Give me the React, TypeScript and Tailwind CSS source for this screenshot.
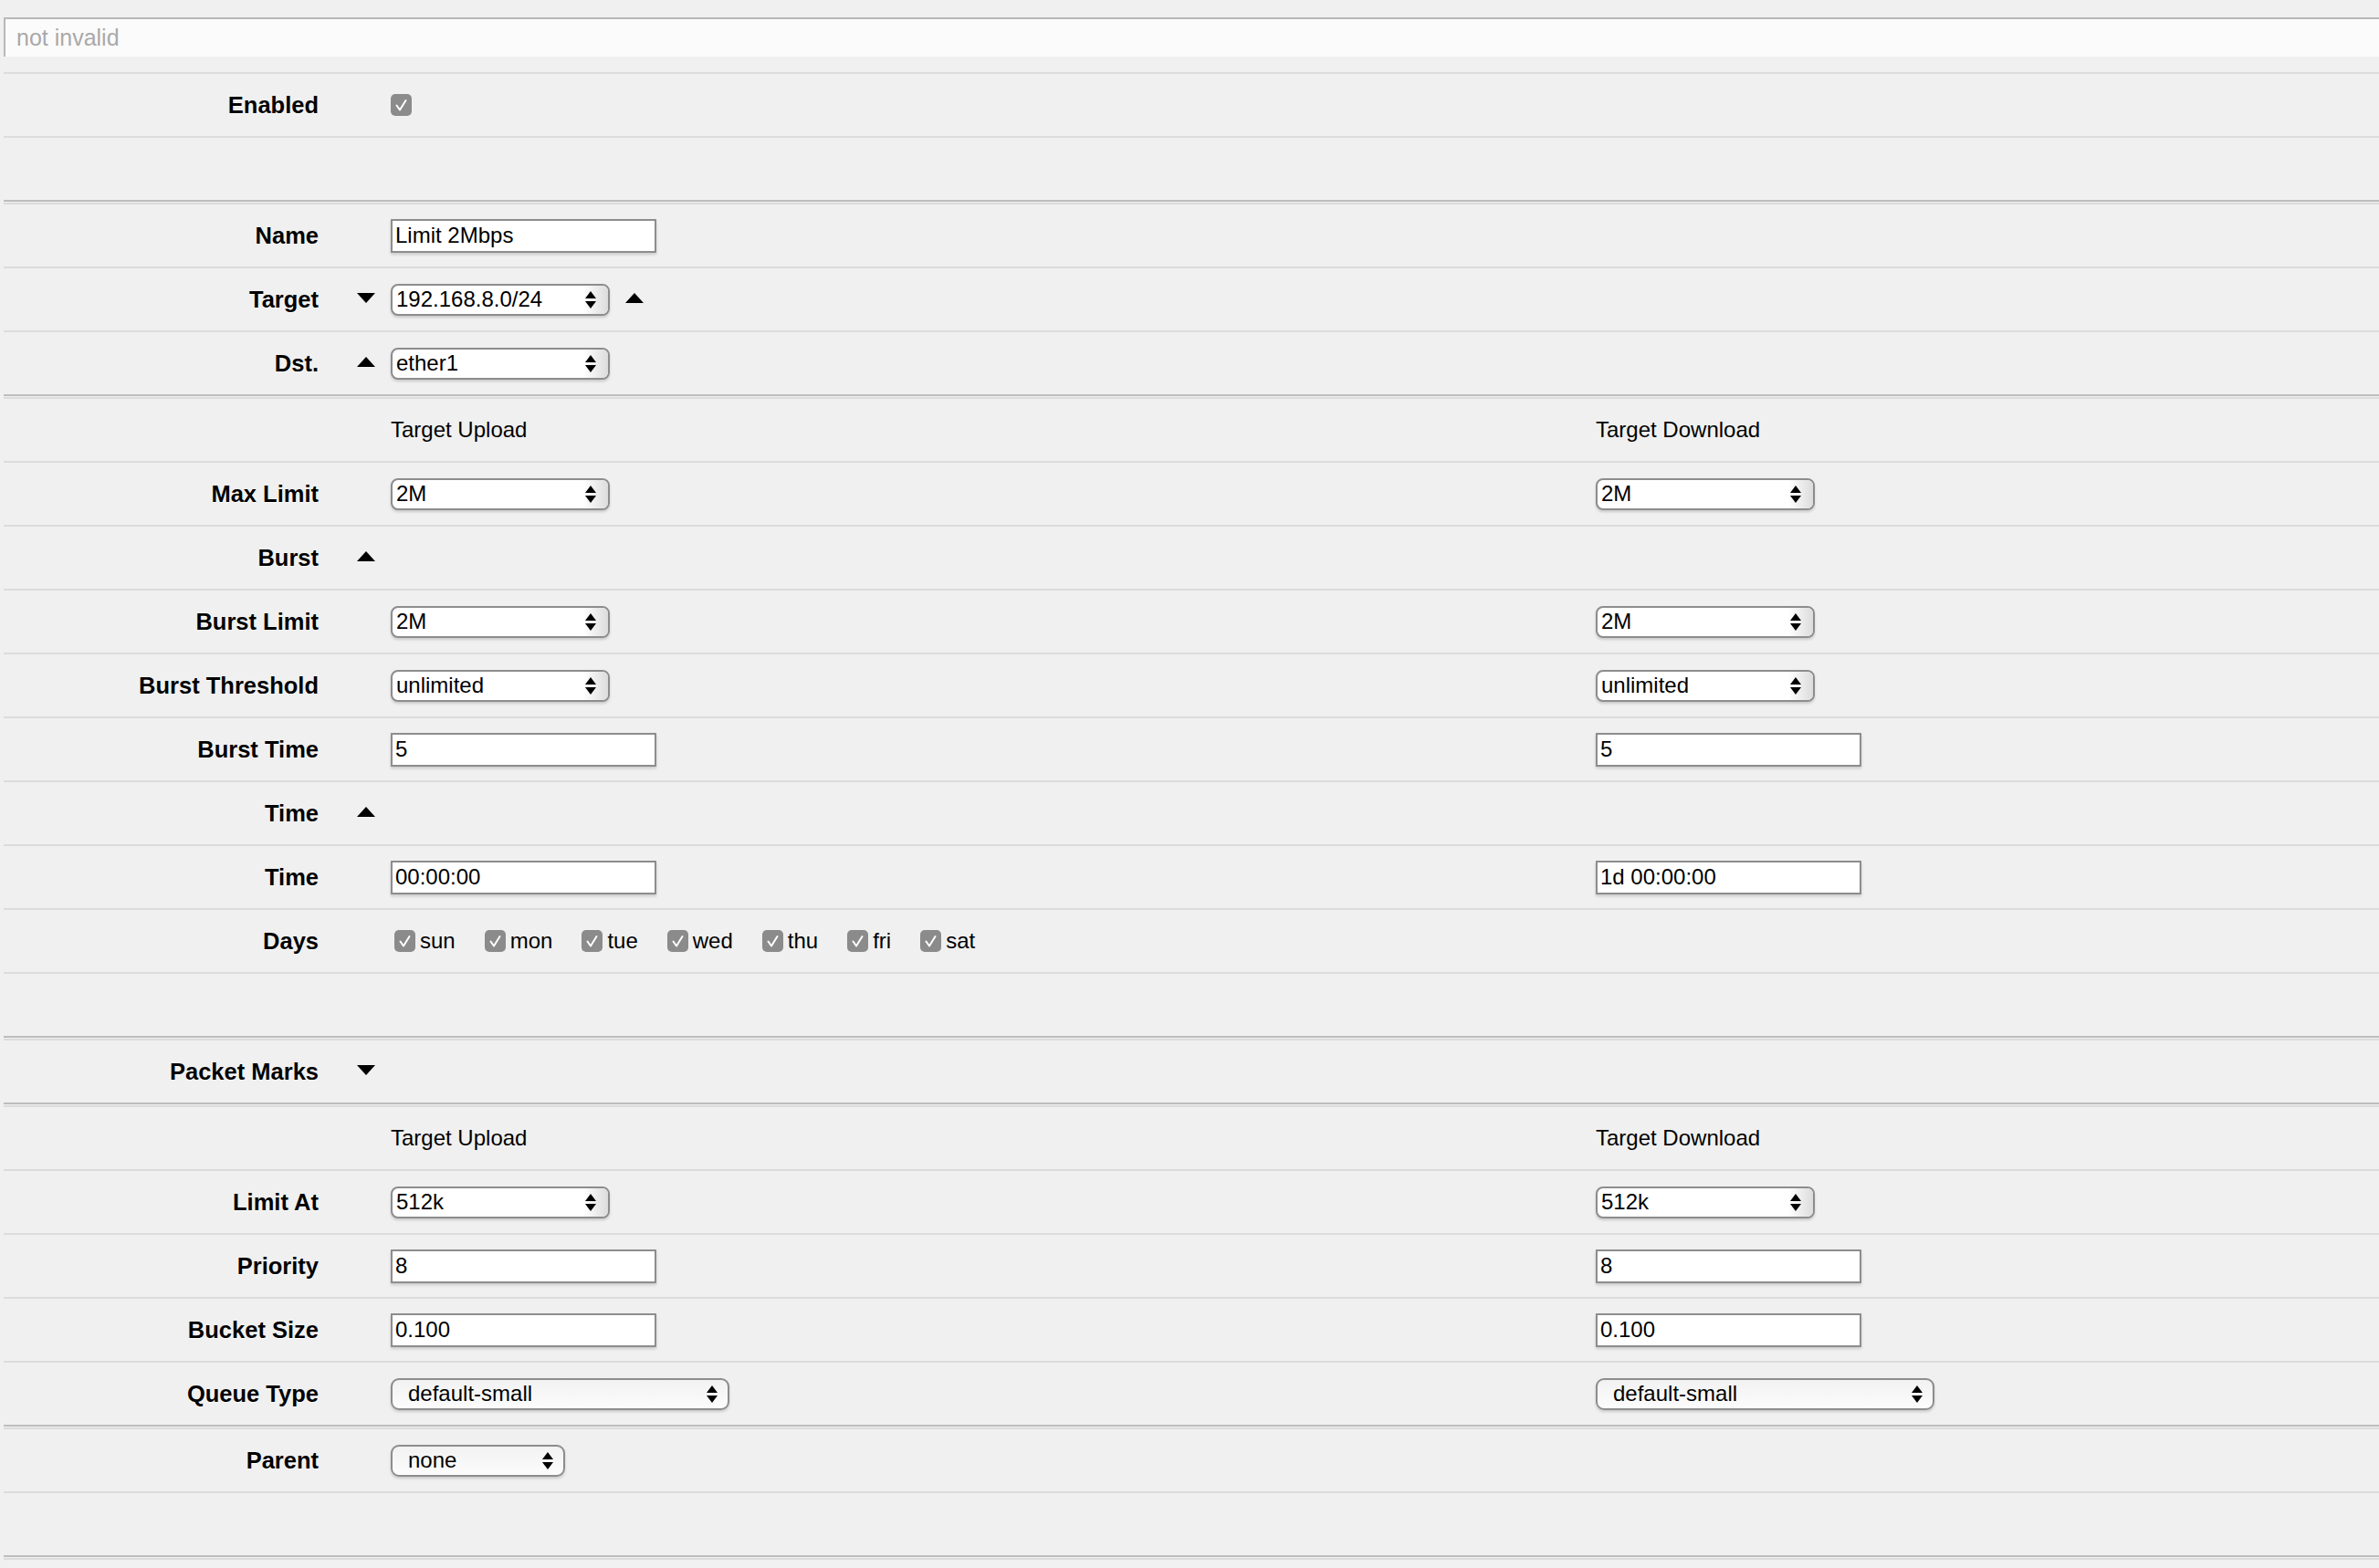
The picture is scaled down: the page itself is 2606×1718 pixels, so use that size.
import React from "react";

function Tri({ dir }: { dir: "up" | "down" }) {
  return (
    <svg width="20" height="11" viewBox="0 0 20 11" className="block">
      <polygon points={dir === "up" ? "10,0 20,11 0,11" : "0,0 20,0 10,11"} fill="#000" />
    </svg>
  );
}

function Arrows() {
  return (
    <svg width="12" height="19" viewBox="0 0 12 19" className="block">
      <polygon points="6,0 12,8 0,8" fill="#000" />
      <polygon points="0,11 12,11 6,19" fill="#000" />
    </svg>
  );
}

function Check() {
  return (
    <div className="w-[23px] h-[24px] rounded-[5px] bg-[#8b8b8b] flex items-center justify-center shrink-0">
      <svg width="15" height="15" viewBox="0 0 15 15" className="block">
        <polyline points="2.5,7.5 6,12.5 12.5,2" fill="none" stroke="#fff" strokeWidth="2" strokeLinecap="round" strokeLinejoin="round" />
      </svg>
    </div>
  );
}

function Select({ value }: { value: string }) {
  return (
    <div className="w-[240px] h-[35px] rounded-[8px] border-2 border-[#8d8d8d] bg-white flex items-center overflow-hidden shadow-[0_2px_3px_rgba(0,0,0,0.16)]">
      <span className="flex-1 pl-[4px] text-[24px] leading-none text-black whitespace-nowrap">{value}</span>
      <div className="h-full w-[27px] flex items-center justify-start pl-[2px] bg-gradient-to-r from-white to-[#dcdcdc]">
        <Arrows />
      </div>
    </div>
  );
}

function Popup({ value, wide }: { value: string; wide?: boolean }) {
  return (
    <div
      className={
        (wide ? "w-[371px]" : "w-[191px]") +
        " h-[35px] rounded-[9px] border-2 border-[#8d8d8d] bg-gradient-to-b from-[#f2f2f2] to-[#fcfcfc] flex items-center pl-[17px] pr-[11px] shadow-[0_2px_3px_rgba(0,0,0,0.16)]"
      }
    >
      <span className="flex-1 text-[24px] leading-none text-black whitespace-nowrap">{value}</span>
      <Arrows />
    </div>
  );
}

function Input({ value }: { value: string }) {
  return (
    <div className="w-[291px] h-[37px] border-2 border-[#8d8d8d] bg-white flex items-center pl-[3px] text-[24px] leading-none text-black shadow-[0_2px_3px_rgba(0,0,0,0.16)] whitespace-nowrap">
      {value}
    </div>
  );
}

function Row({
  label,
  tri,
  left,
  right,
}: {
  label?: string;
  tri?: React.ReactNode;
  left?: React.ReactNode;
  right?: React.ReactNode;
}) {
  return (
    <div className="flex h-[70px] items-center border-t-2 border-[#dcdcdc]">
      <div className="w-[345px] shrink-0 text-right text-[25.5px] font-bold text-black [text-shadow:0_1px_0_#fff] whitespace-nowrap">
        {label}
      </div>
      <div className="w-[79px] shrink-0 flex justify-end pr-[17px] -mt-[4px]">{tri}</div>
      <div className="w-[1320px] shrink-0 flex items-center">{left}</div>
      <div className="flex-1 flex items-center">{right}</div>
    </div>
  );
}

function Divider() {
  return <div className="h-[3px] border-t-2 border-[#bdbdbd]" />;
}

function Header() {
  return (
    <Row
      left={<span className="text-[24px] text-black">Target Upload</span>}
      right={<span className="text-[24px] text-black">Target Download</span>}
    />
  );
}

const days = ["sun", "mon", "tue", "wed", "thu", "fri", "sat"];

export default function App() {
  return (
    <div className="min-h-screen bg-[#f0f0f0] pt-[19px] pl-[4px] font-['Liberation_Sans',Arial,sans-serif] overflow-hidden">
      <div className="h-[43px] border-t-2 border-l-2 border-[#b8b8b8] bg-[#fbfbfb] flex items-center pl-[12px] text-[25px] text-[#a9a9a9]">
        not invalid
      </div>
      <div className="mt-[17px]">
        <Row label="Enabled" left={<Check />} />
        <Row />
        <Divider />
        <Row label="Name" left={<Input value="Limit 2Mbps" />} />
        <Row
          label="Target"
          tri={<Tri dir="down" />}
          left={
            <div className="flex items-center">
              <Select value="192.168.8.0/24" />
              <div className="ml-[17px] -mt-[4px]">
                <Tri dir="up" />
              </div>
            </div>
          }
        />
        <Row label="Dst." tri={<Tri dir="up" />} left={<Select value="ether1" />} />
        <Divider />
        <Header />
        <Row label="Max Limit" left={<Select value="2M" />} right={<Select value="2M" />} />
        <Row label="Burst" tri={<Tri dir="up" />} />
        <Row label="Burst Limit" left={<Select value="2M" />} right={<Select value="2M" />} />
        <Row label="Burst Threshold" left={<Select value="unlimited" />} right={<Select value="unlimited" />} />
        <Row label="Burst Time" left={<Input value="5" />} right={<Input value="5" />} />
        <Row label="Time" tri={<Tri dir="up" />} />
        <Row label="Time" left={<Input value="00:00:00" />} right={<Input value="1d 00:00:00" />} />
        <Row
          label="Days"
          left={
            <div className="flex items-center gap-[32px] pl-[4px]">
              {days.map((d) => (
                <div key={d} className="flex items-center">
                  <Check />
                  <span className="ml-[5px] text-[24px] text-black">{d}</span>
                </div>
              ))}
            </div>
          }
        />
        <Row />
        <Divider />
        <Row label="Packet Marks" tri={<Tri dir="down" />} />
        <Divider />
        <Header />
        <Row label="Limit At" left={<Select value="512k" />} right={<Select value="512k" />} />
        <Row label="Priority" left={<Input value="8" />} right={<Input value="8" />} />
        <Row label="Bucket Size" left={<Input value="0.100" />} right={<Input value="0.100" />} />
        <Row label="Queue Type" left={<Popup value="default-small" wide />} right={<Popup value="default-small" wide />} />
        <Divider />
        <Row label="Parent" left={<Popup value="none" />} />
        <Row />
        <Divider />
        <Row />
      </div>
    </div>
  );
}
